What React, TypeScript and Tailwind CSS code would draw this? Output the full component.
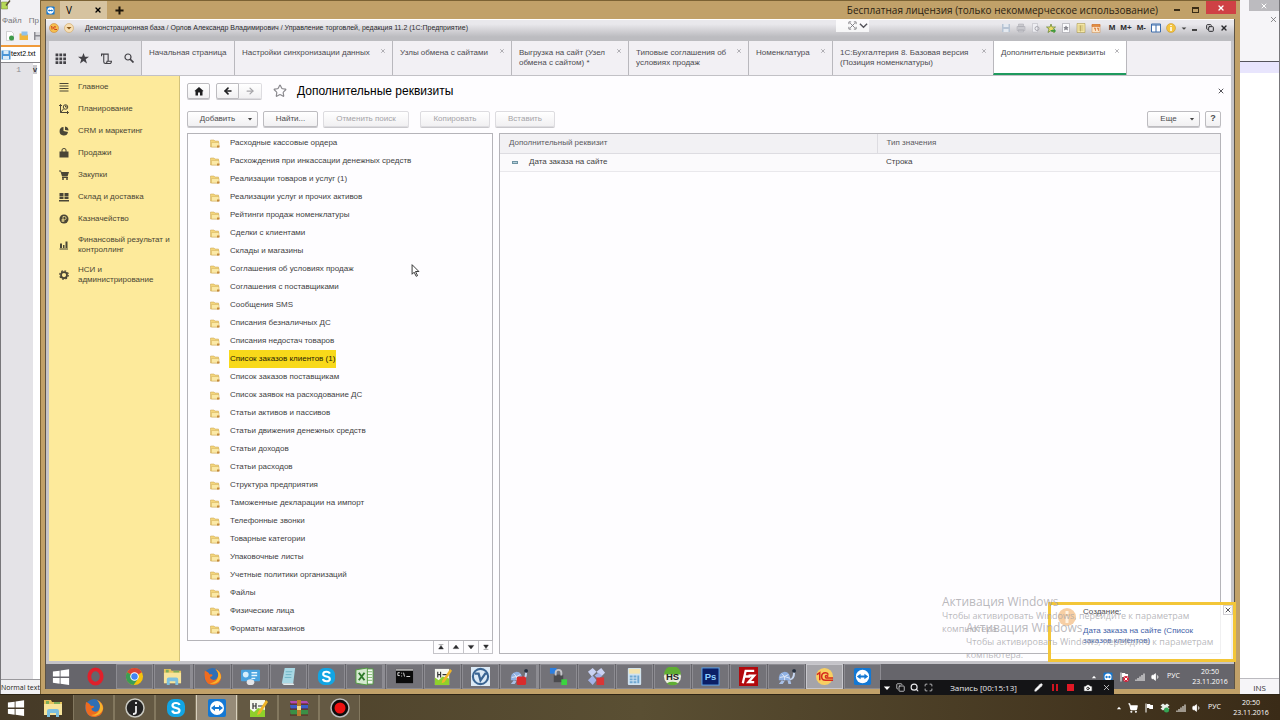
import type { ReactNode } from "react";
import clsx from "clsx";
import {
  ArrowLeft,
  ArrowRight,
  Camera,
  Copy,
  Maximize,
  Pencil,
  Search,
  ShoppingCart,
  Star,
  Volume1,
  X,
} from "lucide-react";

const tabs = [
  { title: "Начальная страница", width: "w-[93px]", closable: false },
  { title: "Настройки синхронизации данных", width: "w-[158px]", closable: true },
  { title: "Узлы обмена с сайтами", width: "w-[119px]", closable: true },
  { title: "Выгрузка на сайт (Узел обмена с сайтом) *", width: "w-[117px]", closable: true },
  { title: "Типовые соглашения об условиях продаж", width: "w-[120px]", closable: true },
  { title: "Номенклатура", width: "w-[84px]", closable: true },
  { title: "1С:Бухгалтерия 8. Базовая версия (Позиция номенклатуры)", width: "w-[161px]", closable: true },
  { title: "Дополнительные реквизиты", width: "w-[133px]", closable: true, active: true },
];

const treeItems = [
  "Расходные кассовые ордера",
  "Расхождения при инкассации денежных средств",
  "Реализации товаров и услуг (1)",
  "Реализации услуг и прочих активов",
  "Рейтинги продаж номенклатуры",
  "Сделки с клиентами",
  "Склады и магазины",
  "Соглашения об условиях продаж",
  "Соглашения с поставщиками",
  "Сообщения SMS",
  "Списания безналичных ДС",
  "Списания недостач товаров",
  "Список заказов клиентов (1)",
  "Список заказов поставщикам",
  "Список заявок на расходование ДС",
  "Статьи активов и пассивов",
  "Статьи движения денежных средств",
  "Статьи доходов",
  "Статьи расходов",
  "Структура предприятия",
  "Таможенные декларации на импорт",
  "Телефонные звонки",
  "Товарные категории",
  "Упаковочные листы",
  "Учетные политики организаций",
  "Файлы",
  "Физические лица",
  "Форматы магазинов",
];

const selectedItem = "Список заказов клиентов (1)";

function Glyph({ children, size = "size-[10px]" }: { children: ReactNode; size?: string }) {
  return (
    <svg viewBox="0 0 20 20" className={clsx(size, "shrink-0")} aria-hidden="true">
      {children}
    </svg>
  );
}

const sections = [
  {
    label: "Главное",
    icon: <path d="M1 3h18M1 8h18M1 13h18M1 18h18" stroke="#4a4636" strokeWidth="2.4" />,
  },
  {
    label: "Планирование",
    icon: (
      <g fill="none" stroke="#4a4636" strokeWidth="2">
        <path d="M3 1v16h16M0 4l3-3 3 3M16 14l3 3-3 3M3 17l6-7" />
        <circle cx="13" cy="6" r="4.5" />
        <path d="M13 3v3h3" />
      </g>
    ),
  },
  {
    label: "CRM и маркетинг",
    icon: (
      <g fill="#4a4636">
        <path d="M9 2a8.5 8.5 0 1 0 9 10l-9-2z" />
        <path d="M12 1v7l7 1a8 8 0 0 0-7-8z" />
      </g>
    ),
  },
  {
    label: "Продажи",
    icon: (
      <g>
        <path d="M1 7h18v12H1z" fill="#4a4636" />
        <path d="M6 9V4q0-3 4-3t4 3v5" fill="none" stroke="#4a4636" strokeWidth="2" />
      </g>
    ),
  },
  {
    label: "Закупки",
    icon: (
      <g fill="#4a4636">
        <path d="M0 1h4l1 3h15l-3 9H6L3 3H0z" />
        <path d="M6 14h12v2H6z" />
        <circle cx="8" cy="18" r="2" />
        <circle cx="16" cy="18" r="2" />
      </g>
    ),
  },
  {
    label: "Склад и доставка",
    icon: <path d="M1 2h8v6H1zM11 2h8v6h-8zM1 9h8v5H1zM11 9h8v5h-8zM0 16h20v3H0z" fill="#4a4636" />,
  },
  {
    label: "Казначейство",
    icon: (
      <g>
        <circle cx="10" cy="10" r="9" fill="#4a4636" />
        <path d="M8 16V5h3a3 3 0 0 1 0 6.5H5M5 14h6" fill="none" stroke="#fce998" strokeWidth="1.6" />
      </g>
    ),
  },
  {
    label: "Финансовый результат и контроллинг",
    tall: true,
    icon: <path d="M2 7h4v9H2zM8 10h3v6H8zM13 3h4v13h-4zM1 17h17v2H1z" fill="#4a4636" />,
  },
  {
    label: "НСИ и администрирование",
    tall: true,
    icon: (
      <g fill="none" stroke="#4a4636">
        <circle cx="10" cy="10" r="6" strokeWidth="3.5" />
        <circle cx="10" cy="10" r="8.5" strokeWidth="2.5" strokeDasharray="3.3 3.375" />
      </g>
    ),
  },
];

function WindowsLogo() {
  return (
    <Glyph size="size-[18px]">
      <path d="M1 4l7.5-1v6.500H1zM9.500 2.800L19 1.500v8H9.500zM1 11h7.500v6.500L1 16.400zM9.500 11H19v8l-9.500-1.400z" fill="#fff" />
    </Glyph>
  );
}

function FirefoxLogo() {
  return (
    <>
      <circle cx="10" cy="10" r="9" fill="#2f6fb5" />
      <path d="M2 4c3 1 4 2 5 4 3-1 4 1 2 2-2 0-2 2 0 3 4 2 7-1 7-5 0-2-1-4-3-6 5 2 7 6 6 10-1 5-5 7-9 7-6 0-10-6-8-15z" fill="#ee6b1f" />
      <path d="M13 2c4 2 6 5 6 9-2 6-8 8-12 6 5 0 9-3 9-9 0-2-1-4-3-6z" fill="#f7b52c" />
    </>
  );
}

function ExplorerLogo() {
  return (
    <>
      <path d="M1 2h7l1 2h10v13H1z" fill="#e6c35c" />
      <path d="M3 3h3v3H3zM11 4h6v2h-6z" fill="#7fae5a" />
      <path d="M1 6h18v11H1z" fill="#f7e49a" />
      <path d="M4 19v-6q0-2 2-2h8q2 0 2 2v6h-3v-4H7v4z" fill="#7cc0e0" />
    </>
  );
}

function SkypeLogo() {
  return (
    <>
      <rect x="1" y="1" width="18" height="18" rx="7" fill="#12a5e4" />
      <path d="M13.500 7C13 5.500 11.500 5 10 5c-2 0-3.500 1-3.500 2.500 0 3.500 7 1.500 7 5C13.500 14 12 15 10 15s-3.500-1-3.700-2.500" fill="none" stroke="#fff" strokeWidth="2.2" />
    </>
  );
}

function TeamViewerLogo() {
  return (
    <>
      <rect x="1" y="1" width="18" height="18" rx="2" fill="#1378d4" />
      <circle cx="10" cy="10" r="7" fill="#fff" />
      <path d="M4 10l4-3v2h4V7l4 3-4 3v-2H8v2z" fill="#1378d4" />
    </>
  );
}

function NotepadPlusLogo() {
  return (
    <>
      <path d="M2 2h15v17H2z" fill="#f5f7ee" />
      <path d="M2 11l4 3 4-4 7 2v7H2z" fill="#8fd12b" />
      <path d="M5 5v6M8 5v6M5 8h3M10 8h5" stroke="#333" strokeWidth="1.2" fill="none" />
      <path d="M18 2l-8 12-1 3 3-1 8-12z" fill="#f0b429" />
    </>
  );
}

function TurtleLogo() {
  return (
    <>
      <path d="M5 14l-3 4h4l2-3zM11 14l1 4h3l-1-4z" fill="#a8bfe5" />
      <path d="M2 14q-1-8 6-9 6 0 6 9z" fill="#8fb0e2" />
      <path d="M5 7l3 3 4-2M8 10v4M3 11l5-1 6 2" fill="none" stroke="#dfe8f7" />
      <path d="M13 13q4-1 4-8l2 1q0 7-5 8z" fill="#c6d5ef" />
      <circle cx="18" cy="4" r="2" fill="#26303f" />
    </>
  );
}

type TaskButton = { name: string; icon: ReactNode; plain?: boolean; stacked?: boolean; active?: boolean };

const remoteTasks: TaskButton[] = [
  {
    name: "Google Chrome",
    icon: (
      <>
        <circle cx="10" cy="10" r="9" fill="#f4c20d" />
        <path d="M10 10L2.200 5.500A9 9 0 0 1 17.800 5.500z" fill="#db4437" />
        <path d="M10 10L2.200 5.500A9 9 0 0 0 9 19l5-7z" fill="#3a9d55" />
        <circle cx="10" cy="10" r="4.5" fill="#fff" />
        <circle cx="10" cy="10" r="3.4" fill="#4285f4" />
      </>
    ),
  },
  { name: "Проводник", icon: <ExplorerLogo />, stacked: true },
  { name: "Firefox", icon: <FirefoxLogo /> },
  {
    name: "Панель управления",
    icon: (
      <>
        <rect x="0" y="3" width="20" height="12" rx="1" fill="#4aa3df" />
        <circle cx="5" cy="8" r="3" fill="#d6effc" />
        <path d="M11 6h6M11 9h6M11 12h4" stroke="#e8f6ff" strokeWidth="1.5" />
        <ellipse cx="10" cy="16" rx="4" ry="3" fill="#e4e6ea" />
      </>
    ),
  },
  {
    name: "Блокнот",
    icon: (
      <>
        <path d="M6 1h11l-2 16H3z" fill="#a8d8e4" />
        <path d="M3 17h12l1 2H5z" fill="#e3eef0" />
        <path d="M7 5h7M7 8h6M6 11h7" stroke="#6db2c4" />
      </>
    ),
  },
  { name: "Skype", icon: <SkypeLogo /> },
  {
    name: "Excel",
    stacked: true,
    icon: (
      <>
        <path d="M8 2h11v16H8z" fill="#f4f8f2" stroke="#4f9a3f" />
        <path d="M12 5h6M12 8h6M12 11h6M12 14h6" stroke="#7ab86c" />
        <path d="M1 3l12-2v18L1 17z" fill="#d5ead0" stroke="#4f9a3f" />
        <path d="M4 6l6 8M10 6l-6 8" stroke="#2e7a2a" strokeWidth="2" />
      </>
    ),
  },
  {
    name: "Командная строка",
    icon: (
      <>
        <rect x="1" y="2" width="18" height="15" fill="#0a0a0a" />
        <path d="M1 2h18v2H1z" fill="#aaa" />
        <path d="M5 6H3v3h2M7 6v1M7 9v1M9 6l1 4M12 10h4" stroke="#ddd" fill="none" />
      </>
    ),
  },
  { name: "Notepad++", icon: <NotepadPlusLogo /> },
  {
    name: "VNC",
    icon: (
      <>
        <rect x="0" y="0" width="20" height="20" fill="#dceaf6" />
        <circle cx="10" cy="10" r="8" fill="none" stroke="#3a6593" strokeWidth="2.2" />
        <path d="M4 7h4l2 7 5-7h2" fill="none" stroke="#3a6593" strokeWidth="2.4" />
      </>
    ),
  },
  {
    name: "TortoiseSVN",
    stacked: true,
    icon: (
      <>
        <TurtleLogo />
        <rect x="8" y="10" width="10" height="9" rx="2" fill="#d92c2c" />
      </>
    ),
  },
  {
    name: "WinSCP",
    icon: (
      <>
        <rect x="1" y="1" width="7" height="6" fill="#2d7fe0" />
        <rect x="5" y="8" width="10" height="8" fill="#4b4b4e" />
        <path d="M7 9V6q0-3 3-3t3 3v3" fill="none" stroke="#c4c4c8" strokeWidth="2" />
        <rect x="13" y="13" width="6" height="6" fill="#3bd43f" />
      </>
    ),
  },
  {
    name: "Конфигуратор",
    icon: (
      <>
        <path d="M1 5l5-4 4 4-5 5zM10 5l5-4 4 5-4 4z" fill="#c9d2f3" />
        <path d="M1 14l5-5 4 5-4 5zM8 9l4-3 4 3-4 4z" fill="#a4b3e8" />
        <path d="M10 11h8v8h-8z" fill="#d93636" />
      </>
    ),
  },
  {
    name: "Калькулятор",
    icon: (
      <>
        <rect x="3" y="1" width="14" height="18" rx="1" fill="#cfe2f0" />
        <rect x="4" y="2" width="12" height="5" fill="#f3e3ae" />
        <path d="M5 9h3v2H5zM9 9h3v2H9zM5 12h3v2H5zM9 12h3v2H9zM5 15h3v2H5zM9 15h3v2H9zM13 9h2v8h-2z" fill="#6fa8d2" />
      </>
    ),
  },
  {
    name: "HeidiSQL",
    icon: (
      <>
        <circle cx="10" cy="10" r="9" fill="#e9eddc" />
        <path d="M1 8a9 9 0 0 1 18 0z" fill="#5fae33" />
        <path d="M4 17a9 9 0 0 0 12 0q-6-3-12 0z" fill="#5fae33" />
        <text x="10" y="14" textAnchor="middle" fontSize="10" fontWeight="700" fontFamily="Liberation Sans, sans-serif" fill="#222">
          HS
        </text>
      </>
    ),
  },
  {
    name: "Photoshop",
    icon: (
      <>
        <rect x="1" y="1" width="18" height="18" fill="#0b1f66" stroke="#5da6ef" />
        <text x="10" y="14" textAnchor="middle" fontSize="10" fontWeight="700" fontFamily="Liberation Sans, sans-serif" fill="#8fd0ff">
          Ps
        </text>
      </>
    ),
  },
  {
    name: "FileZilla",
    icon: (
      <>
        <rect x="0" y="0" width="20" height="20" fill="#b3090d" />
        <path d="M4 17L7 4h9M6 10h6M10 9h6l-6 7h6" fill="none" stroke="#fff" strokeWidth="2.4" />
      </>
    ),
  },
  { name: "TortoiseHg", icon: <TurtleLogo /> },
  {
    name: "1С:Предприятие",
    active: true,
    icon: (
      <>
        <circle cx="10" cy="10" r="9" fill="#f8cf62" />
        <path d="M2 8l3-2v8M14 8q-1-2-3-2-4 0-4 4t4 4h8M14 10q-3-2-3 0t2 1.500h6" fill="none" stroke="#d62b1d" strokeWidth="1.6" />
      </>
    ),
  },
  { name: "TeamViewer", icon: <TeamViewerLogo /> },
];

const localTasks: TaskButton[] = [
  { name: "Проводник", icon: <ExplorerLogo />, plain: true },
  { name: "Firefox", icon: <FirefoxLogo /> },
  {
    name: "jing",
    icon: (
      <>
        <circle cx="10" cy="10" r="9" fill="#222" stroke="#c8c8c0" strokeWidth="1.5" />
        <path d="M11 8v6q0 2-3 2M11 4v2" fill="none" stroke="#eee" strokeWidth="1.8" />
      </>
    ),
  },
  { name: "Skype", icon: <SkypeLogo /> },
  { name: "TeamViewer", icon: <TeamViewerLogo />, active: true },
  { name: "Notepad++", icon: <NotepadPlusLogo /> },
  {
    name: "WinRAR",
    icon: (
      <>
        <path d="M1 3h17l2 3H2z" fill="#b34bb0" />
        <path d="M1 7h18v4H2z" fill="#3c5fc9" />
        <path d="M1 12h18v5H2z" fill="#3b8f46" />
        <path d="M1 6h18M1 11h18M1 17h18" stroke="#5a1f1f" />
        <path d="M8 2h4v16H8z" fill="#b87b2c" />
        <path d="M8 8h4v4H8z" fill="#f3dc8a" />
      </>
    ),
  },
  {
    name: "Запись экрана",
    icon: (
      <>
        <circle cx="10" cy="10" r="9" fill="#0c0c0c" stroke="#bcbcbc" strokeWidth="1.5" />
        <circle cx="10" cy="10" r="5.5" fill="#ee1111" />
      </>
    ),
  },
];

function FolderIcon() {
  return (
    <svg viewBox="0 0 20 18" className="h-[9px] w-[10px] shrink-0" aria-hidden="true">
      <path d="M1 2h7l2 2h7v12H1z" fill="#f3d57c" stroke="#c9a24a" />
      <path d="M3 7h15v9H3z" fill="#fbe9a6" stroke="#d3ae57" />
      <path d="M14 13h5v4h-5z" fill="#c48a3a" />
    </svg>
  );
}

function SignalIcon() {
  return (
    <Glyph>
      <path d="M1 15h2v3H1zM5 12h2v6H5zM9 9h2v9H9zM13 6h2v12h-2zM17 3h2v15h-2z" fill="#fff" />
    </Glyph>
  );
}

function FlagIcon({ alert }: { alert?: boolean }) {
  return (
    <Glyph>
      <path d="M3 1h2v18H3zM6 2h6l1 2h5v8h-7l-1-2H6z" fill="#fff" />
      {alert && <circle cx="14" cy="14" r="6" fill="#d7263d" />}
      {alert && <path d="M11 11l6 6M17 11l-6 6" stroke="#fff" strokeWidth="2" />}
    </Glyph>
  );
}

function Clock() {
  return (
    <div className="w-12 text-center text-[7px] leading-[10px]">
      <div>20:50</div>
      <div>23.11.2016</div>
    </div>
  );
}

function CommandButton({ children, disabled, className }: { children: ReactNode; disabled?: boolean; className: string }) {
  return (
    <button
      type="button"
      disabled={disabled}
      className={clsx(
        "flex h-4 items-center justify-center rounded-xs border bg-gradient-to-b from-white to-[#f1f0f2] shadow-[0_1px_0_#c9c8cc]",
        disabled ? "border-[#dddce0] text-[#a5a4a8]" : "border-[#bdbcc0] text-[#4b4b4e]",
        className,
      )}
    >
      {children}
    </button>
  );
}

function EditorLeft() {
  return (
    <aside className="flex w-10 shrink-0 flex-col overflow-hidden border-l border-[#77767a] bg-[#f1f0f3] whitespace-nowrap">
      <div className="flex h-[14px] items-start">
        <Glyph>
          <path d="M1 4h12v14H1z" fill="#b6d957" stroke="#6b7f2c" />
          <path d="M18 1l-8 10" stroke="#5c5138" strokeWidth="3" />
        </Glyph>
      </div>
      <div className="flex h-[13px] items-center justify-between pr-px pl-px text-[#77767a]">
        <span>Файл</span>
        <span>Пр</span>
      </div>
      <div className="flex h-[18px] items-center gap-1 pl-1">
        <Glyph>
          <path d="M3 1h10l4 4v14H3z" fill="#fff" stroke="#aaa" />
          <circle cx="13" cy="14" r="5" fill="#3f9a4a" />
        </Glyph>
        <Glyph>
          <path d="M1 5h7l2 2h8v11H1z" fill="#f0b63c" />
          <path d="M5 1h12v8H5z" fill="#8fc1ea" />
        </Glyph>
        <Glyph>
          <path d="M2 2h16v16H2z" fill="#8b8b92" />
          <path d="M5 2h9v6H5zM5 11h10v7H5z" fill="#d8d8dc" />
        </Glyph>
      </div>
      <div className="flex h-[17px] items-center border-t-2 border-[#f09a3a] bg-white text-[7px] text-black">
        <Glyph>
          <path d="M1 1h18v18H1z" fill="#4b94d6" />
          <path d="M5 1h10v7H5zM4 12h12v7H4z" fill="#dcebf8" />
        </Glyph>
        text2.txt
      </div>
      <div className="flex min-h-0 flex-1 border-t border-[#88878b]">
        <div className="w-8 bg-[#e4e3e7] pr-3 text-right font-['Liberation_Mono',monospace] leading-[14px] text-[#8b8a8e]">1</div>
        <div className="flex-1 bg-white leading-[14px]">
          <span className="bg-[#c8c8cc]">v</span>
        </div>
      </div>
      <div className="h-[15px] border-t border-[#9a999d] font-['Open_Sans',sans-serif] text-[7px] leading-[15px] text-[#1e1e20]">Normal text</div>
    </aside>
  );
}

function EditorRight() {
  return (
    <aside className="flex w-10 shrink-0 flex-col border-r border-[#77767a] bg-[#f6f5f8]">
      <div className="flex h-[11px] justify-end">
        <button type="button" aria-label="Закрыть редактор" className="flex w-[30px] items-center justify-center bg-[#bcbbbf] text-white">
          <X size={8} strokeWidth={3} />
        </button>
      </div>
      <div className="flex h-[51px] justify-end border-b border-[#55545c] pt-1 pr-px text-[#66656a]">
        <X size={9} />
      </div>
      <div className="min-h-0 flex-1 bg-white">
        <div className="h-[11px] bg-[#e8e5fd]" />
      </div>
      <div className="h-4 border-t border-[#bbbabf] text-center font-['Open_Sans',sans-serif] leading-[18px] text-[#333]">INS</div>
    </aside>
  );
}

function ViewerTitle() {
  return (
    <header className="flex h-[19px] items-center border-t border-[#7b6234] text-[#2b2112]">
      <div className="flex w-[19px] justify-center">
        <Glyph size="size-[9px]">
          <TeamViewerLogo />
        </Glyph>
      </div>
      <div className="flex h-full w-[47px] items-center bg-[#d6c3a0] pl-1.5 font-['Open_Sans',sans-serif] text-[10px] text-black">
        V
        <button type="button" aria-label="Закрыть сеанс" className="ml-[22px]">
          <X size={8} strokeWidth={4} />
        </button>
      </div>
      <button type="button" aria-label="Новый сеанс" className="ml-2">
        <Glyph size="size-[9px]">
          <path d="M10 1v18M1 10h18" stroke="#1c150a" strokeWidth="4.5" />
        </Glyph>
      </button>
      <span className="ml-auto font-['Open_Sans',sans-serif] text-[10px] whitespace-nowrap">
        Бесплатная лицензия (только некоммерческое использование)
      </span>
      <button type="button" aria-label="Свернуть" className="ml-4 h-[2px] w-[6px] bg-[#3a2d17]" />
      <button type="button" aria-label="Развернуть" className="ml-3 h-[6px] w-[7px] border border-t-2 border-[#3a2d17]" />
      <button type="button" aria-label="Закрыть" className="ml-[7px] flex h-[13px] w-[30px] items-center justify-center self-start bg-[#cf4145] text-white">
        <X size={8} strokeWidth={4} />
      </button>
      <div className="w-[4px]" />
    </header>
  );
}

function AppTitle() {
  return (
    <div className="flex h-[22px] items-center gap-[5px] border-t border-white bg-gradient-to-b from-[#e9e8ec] from-20% to-[#bcbcc0] to-80% pr-[6px] pb-[5px] pl-[3px] text-[#2b2b2e]">
      <Glyph>
        <circle cx="10" cy="10" r="9" fill="#f6c04e" stroke="#c9782a" />
        <path d="M4 8l2-1v6M14 8q-5-2-5 2t7 3" fill="none" stroke="#cf3b1c" strokeWidth="2" />
      </Glyph>
      <Glyph>
        <circle cx="10" cy="10" r="9" fill="#f7dfb4" stroke="#c99a4f" />
        <path d="M5 8h10l-5 5z" fill="#8a5a1c" />
      </Glyph>
      <span className="ml-[6px] text-[7px] whitespace-nowrap">
        Демонстрационная база / Орлов Александр Владимирович / Управление торговлей, редакция 11.2 (1С:Предприятие)
      </span>
      <div className="ml-auto flex items-center gap-[5px]">
        <Glyph>
          <path d="M2 2h16v16H2z" fill="#b7c4d4" />
          <path d="M5 2h10v6H5zM5 12h10v6H5z" fill="#e4e9f0" />
        </Glyph>
        <Glyph>
          <path d="M2 7h16v8H2zM5 2h10v5H5zM5 13h10v5H5z" fill="#c9c9ce" stroke="#a9a9b0" />
        </Glyph>
        <Glyph>
          <path d="M3 1h10v17H3z" fill="#eeeef2" stroke="#b3b3ba" />
          <circle cx="12" cy="11" r="4" fill="none" stroke="#a8a8b0" strokeWidth="2" />
        </Glyph>
        <Glyph>
          <path d="M10 2l2 6h7l-5 4 2 7-6-4-6 4 2-7-5-4h7z" fill="#e9dc68" stroke="#6c8a35" strokeWidth="1.5" />
          <path d="M10 14h6v-3l4 5-4 4v-3h-6z" fill="#3d9b3d" />
        </Glyph>
        <Glyph>
          <path d="M3 1h14v18H3z" fill="#fafafc" stroke="#8f8f97" />
          <path d="M10 5l2 3h3l-2 3 1 4-4-2-4 2 1-4-2-3h3z" fill="#87878f" />
        </Glyph>
        <Glyph>
          <path d="M2 1h16v18H2z" fill="#f5e8a6" stroke="#9c8a3c" />
          <path d="M5 6h10M5 10h10M5 14h10M9 5v12" stroke="#9c8a3c" />
        </Glyph>
        <Glyph>
          <path d="M2 3h16v16H2z" fill="#fbe3c5" stroke="#d08a42" />
          <path d="M2 3h16v4H2zM6 10h3v6M12 10h3v6" fill="#e0913e" stroke="#d0622a" />
        </Glyph>
        <span className="ml-[3px] font-bold">M</span>
        <span className="font-bold">M+</span>
        <span className="font-bold">M-</span>
        <Glyph>
          <path d="M1 2h18v16H1z" fill="#fff" stroke="#3c6cab" strokeWidth="2" />
          <path d="M1 4h18M10 4v14" stroke="#3c6cab" strokeWidth="2" />
        </Glyph>
        <Glyph>
          <circle cx="10" cy="10" r="9" fill="#f4c53f" stroke="#c48e2b" />
          <path d="M10 4v2M10 8v8" stroke="#fff" strokeWidth="3" />
        </Glyph>
        <Glyph size="size-[6px]">
          <path d="M2 8h16l-8 8z" fill="#444" />
        </Glyph>
        <button type="button" aria-label="Свернуть окно" className="mt-1 h-[2px] w-[5px] bg-[#444]" />
        <Copy size={8} strokeWidth={3} className="ml-1" />
        <X size={8} strokeWidth={4} className="ml-px" />
      </div>
    </div>
  );
}

function TabBar() {
  return (
    <div className="flex h-[35px] border-b border-[#c2c1c6] bg-[#f2f0f4] text-[#4c4b50]">
      <div className="flex w-[92px] shrink-0 items-center justify-between bg-[#e6e5e9] pr-[7px] pl-[6px]">
        <button type="button" aria-label="Меню">
          <Glyph size="size-[11px]">
            <path d="M1 1h5v5H1zM8 1h5v5H8zM15 1h5v5h-5zM1 8h5v5H1zM8 8h5v5H8zM15 8h5v5h-5zM1 15h5v5H1zM8 15h5v5H8zM15 15h5v5h-5z" fill="#434247" />
          </Glyph>
        </button>
        <button type="button" aria-label="Избранное">
          <Glyph size="size-[11px]">
            <path d="M10 0l2.600 7H20l-6 4.500 2.300 7.500L10 14.500 3.700 19 6 11.500 0 7h7.400z" fill="#434247" />
          </Glyph>
        </button>
        <button type="button" aria-label="История">
          <Glyph size="size-[11px]">
            <path d="M1 6V2h12v12M5 2v14q0 3 3 3h9q2-1 2-4h-8q0 4-3 4" fill="none" stroke="#434247" strokeWidth="2" />
          </Glyph>
        </button>
        <button type="button" aria-label="Поиск">
          <Glyph>
            <circle cx="8" cy="8" r="6" fill="none" stroke="#434247" strokeWidth="2.4" />
            <path d="M12 12l7 7" stroke="#434247" strokeWidth="3.5" />
          </Glyph>
        </button>
      </div>
      {tabs.map((tab) => (
        <div
          key={tab.title}
          className={clsx(
            "flex min-w-0 items-start border-l border-[#b9b8bd] pt-[7px] pl-[7px]",
            tab.width,
            tab.active && "border-b-2 border-b-[#1f9a5e] bg-white",
          )}
        >
          <button type="button" className="min-w-0 flex-1 text-left leading-[10px]">
            {tab.title}
          </button>
          {tab.closable && (
            <button type="button" aria-label={`Закрыть: ${tab.title}`} className="mr-[6px] ml-1 text-[#99989d]">
              <X size={6} strokeWidth={3} />
            </button>
          )}
        </div>
      ))}
      <div className="flex-1 border-l border-[#b9b8bd]" />
    </div>
  );
}

function Sidebar() {
  return (
    <nav className="w-[131px] shrink-0 border-r border-[#d2c27c] bg-[#fdea9b] text-[#4a4634]">
      {sections.map((section) => (
        <a
          key={section.label}
          href="#section"
          className={clsx("flex items-center gap-[9px] pr-1 pl-[10px] leading-[10px]", section.tall ? "h-[30px]" : "h-[22px]")}
        >
          <Glyph>{section.icon}</Glyph>
          <span>{section.label}</span>
        </a>
      ))}
    </nav>
  );
}

function TreePanel() {
  return (
    <div className="flex w-[306px] shrink-0 flex-col">
      <ul className="min-h-0 flex-1 overflow-hidden border border-[#b5b4b9] text-[#3f3f43]">
        {treeItems.map((item) => (
          <li key={item} className="flex h-[18px] items-center gap-[9px] pl-[22px] whitespace-nowrap">
            <FolderIcon />
            <span className={clsx("px-px leading-[18px]", item === selectedItem && "bg-[#f8d91a] text-[#1f1c08]")}>{item}</span>
          </li>
        ))}
      </ul>
      <div className="flex h-[13px] justify-end">
        {[
          { label: "В начало", d: "M4 4h12M10 6l6 9H4z" },
          { label: "Вверх", d: "M10 5l7 9H3z" },
          { label: "Вниз", d: "M10 15l7-9H3z" },
          { label: "В конец", d: "M4 16h12M10 14l6-9H4z" },
        ].map((arrow) => (
          <button
            key={arrow.label}
            type="button"
            aria-label={arrow.label}
            className="flex w-[15px] items-center justify-center border-b border-l border-[#c5c4c9] last:border-r"
          >
            <Glyph size="size-[8px]">
              <path d={arrow.d} fill="#2b2b2e" stroke="#2b2b2e" />
            </Glyph>
          </button>
        ))}
      </div>
    </div>
  );
}

function AttributesTable() {
  return (
    <div className="min-w-0 flex-1 border border-[#b5b4b9]">
      <table className="w-full table-fixed border-collapse text-left">
        <thead>
          <tr className="h-[19px] border-b border-[#dddce1] bg-[#f2f1f4] text-[#5b5a5f]">
            <th className="w-[377px] pl-[9px] font-normal">Дополнительный реквизит</th>
            <th className="border-l border-[#dddce1] pl-[9px] font-normal">Тип значения</th>
          </tr>
        </thead>
        <tbody>
          <tr className="h-[18px] border-b border-[#e9e8ec] bg-[#fbfafc] text-[#3f3f43]">
            <td className="pl-[12px]">
              <span className="flex items-center gap-[11px]">
                <span className="h-[3px] w-[6px] border border-[#6f93a3] bg-[#b5d0da]" />
                Дата заказа на сайте
              </span>
            </td>
            <td className="pl-[9px]">Строка</td>
          </tr>
        </tbody>
      </table>
    </div>
  );
}

function MainForm() {
  return (
    <main className="flex min-w-0 flex-1 flex-col bg-[#fefdff] pt-[7px] pr-[10px] pb-[7px] pl-[7px]">
      <div className="flex h-4 items-center">
        <CommandButton className="w-[23px]">
          <Glyph>
            <path d="M1 10l9-8 9 8-2 1v8h-5v-6H8v6H3v-8z" fill="#1e1e20" />
          </Glyph>
        </CommandButton>
        <div className="ml-[6px] flex">
          <CommandButton className="w-[23px] rounded-r-none">
            <ArrowLeft size={10} strokeWidth={4} className="text-[#1e1e20]" />
          </CommandButton>
          <CommandButton className="w-[23px] rounded-l-none border-l-0" disabled>
            <ArrowRight size={10} strokeWidth={3} />
          </CommandButton>
        </div>
        <Star size={14} strokeWidth={2} className="ml-[11px] text-[#8a898e]" />
        <h1 className="ml-[10px] text-[12px] text-black">Дополнительные реквизиты</h1>
        <button type="button" aria-label="Закрыть форму" className="-mr-1 ml-auto text-[#55545a]">
          <X size={8} strokeWidth={3} />
        </button>
      </div>
      <div className="mt-[11px] flex h-[17px] items-center gap-[5px]">
        <CommandButton className="w-[71px] gap-3 pl-2">
          Добавить
          <Glyph size="size-[6px]">
            <path d="M3 7h14l-7 8z" fill="#444" />
          </Glyph>
        </CommandButton>
        <CommandButton className="w-[55px]">Найти...</CommandButton>
        <CommandButton className="w-[86px]" disabled>
          Отменить поиск
        </CommandButton>
        <CommandButton className="ml-[6px] w-[70px]" disabled>
          Копировать
        </CommandButton>
        <CommandButton className="w-[60px]" disabled>
          Вставить
        </CommandButton>
        <CommandButton className="ml-auto w-[53px] gap-3 pl-2">
          Еще
          <Glyph size="size-[6px]">
            <path d="M3 7h14l-7 8z" fill="#444" />
          </Glyph>
        </CommandButton>
        <CommandButton className="w-4 text-[9px] font-bold">?</CommandButton>
      </div>
      <div className="mt-[6px] flex min-h-0 flex-1 gap-[6px]">
        <TreePanel />
        <AttributesTable />
      </div>
    </main>
  );
}

function RemoteTaskbar() {
  return (
    <div className="flex h-[25px] items-center bg-[#66656b] pl-[3px] font-['Open_Sans',sans-serif] text-white">
      <button type="button" aria-label="Пуск" className="ml-[3px]">
        <WindowsLogo />
      </button>
      <button type="button" aria-label="Opera" className="mr-[11px] ml-[16px]">
        <Glyph size="size-[19px]">
          <ellipse cx="10" cy="10" rx="6.5" ry="7.5" fill="none" stroke="#e0202b" strokeWidth="4" />
        </Glyph>
      </button>
      <div className="flex h-full gap-px">
        {remoteTasks.map((task) => (
          <button
            key={task.name}
            type="button"
            aria-label={task.name}
            className={clsx(
              "flex w-[37px] items-center justify-center border",
              task.active ? "border-[#c9c8cd] bg-[#a5a4a9]" : "border-[#8d8c92] bg-[#737278]",
              task.stacked && "mr-[2px] shadow-[2px_0_0_#8d8c92]",
            )}
          >
            <Glyph size="size-[19px]">{task.icon}</Glyph>
          </button>
        ))}
      </div>
      <div className="ml-auto flex items-center gap-[6px]">
        <Glyph size="size-[6px]">
          <path d="M3 14h14l-7-8z" fill="#fff" />
        </Glyph>
        <Glyph>
          <TeamViewerLogo />
        </Glyph>
        <FlagIcon alert />
        <SignalIcon />
        <Volume1 size={10} fill="#fff" />
        <span className="text-[7px]">РУС</span>
        <Clock />
      </div>
    </div>
  );
}

function LocalTaskbar() {
  return (
    <footer className="flex h-[26px] shrink-0 items-center border-t border-[#2e2515] bg-gradient-to-r from-[#463a27] via-[#5a4f33] to-[#3a2b17] pr-[5px] font-['Open_Sans',sans-serif] text-white">
      <button type="button" aria-label="Пуск" className="flex w-8 justify-center">
        <WindowsLogo />
      </button>
      <div className="flex h-full">
        {localTasks.map((task) => (
          <button
            key={task.name}
            type="button"
            aria-label={task.name}
            className={clsx(
              "flex w-[41px] items-center justify-center border-x",
              task.plain && "border-transparent",
              task.active && "border-[#d8d0bd] bg-[#968b78]",
              !task.plain && !task.active && "border-[#83785f] bg-[#645943]",
            )}
          >
            <Glyph size="size-5">{task.icon}</Glyph>
          </button>
        ))}
      </div>
      <div className="ml-auto flex items-center gap-[6px]">
        <Glyph size="size-[6px]">
          <path d="M3 14h14l-7-8z" fill="#fff" />
        </Glyph>
        <ShoppingCart size={10} fill="#fff" strokeWidth={3} />
        <FlagIcon />
        <Glyph>
          <path d="M1 5l5-4 4 3 4-3 5 4-4 3 4 3-5 4-4-3-4 3-5-4 4-3z" fill="#e7f0ea" />
          <circle cx="13" cy="14" r="5" fill="#35a555" />
        </Glyph>
        <SignalIcon />
        <Volume1 size={10} fill="#fff" />
        <span className="text-[7px]">РУС</span>
        <Clock />
      </div>
    </footer>
  );
}

function RecorderBar() {
  return (
    <div className="absolute right-[166px] bottom-[25px] flex h-[15px] w-[234px] items-center gap-[5px] bg-[#141416] px-[3px] font-['Open_Sans',sans-serif] text-[#e9e9ec]">
      <Glyph size="size-[8px]">
        <path d="M2 6h16l-8 9z" fill="#fff" />
      </Glyph>
      <Copy size={9} strokeWidth={2} />
      <Search size={9} strokeWidth={3} />
      <Maximize size={9} />
      <span className="mx-auto whitespace-nowrap">Запись [00:15:13]</span>
      <Pencil size={9} fill="#fff" />
      <button type="button" aria-label="Пауза" className="ml-1 h-[7px] w-[6px] border-x-2 border-[#cf1420]" />
      <button type="button" aria-label="Стоп" className="mx-1 size-[7px] bg-[#e01825]" />
      <Camera size={10} fill="#fff" stroke="#141416" />
      <X size={9} className="ml-1" />
    </div>
  );
}

function ActivationNotice({ className }: { className: string }) {
  return (
    <div className={clsx("pointer-events-none absolute w-[266px] font-['Open_Sans',sans-serif] text-[#a2a1a6]/75", className)}>
      <div className="text-[12px] leading-[14px]">Активация Windows</div>
      <div className="text-[9px] leading-[13px]">Чтобы активировать Windows, перейдите к параметрам компьютера.</div>
    </div>
  );
}

function CreatedToast() {
  return (
    <div className="absolute right-[44px] bottom-[58px] flex h-[60px] w-[188px] border-[3px] border-[#f3c638] bg-white/80 pt-[2px] pl-[6px]">
      <Glyph size="size-5">
        <circle cx="10" cy="10" r="9" fill="#f7cfa4" />
        <path d="M10 4v3M10 9v7" stroke="#fff3e2" strokeWidth="3" />
      </Glyph>
      <div className="ml-[6px] leading-[10px] text-[#4c4b50]">
        <div>Создание:</div>
        <a href="#created" className="mt-[9px] block w-[125px] text-[#3f62a8]">
          Дата заказа на сайте (Список заказов клиентов)
        </a>
      </div>
      <button type="button" aria-label="Закрыть уведомление" className="absolute top-0 right-0 flex size-[10px] items-center justify-center border border-[#d0cfd4] text-[#55545a]">
        <X size={8} strokeWidth={3} />
      </button>
    </div>
  );
}

export default function App() {
  return (
    <div className="relative flex h-screen flex-col overflow-hidden bg-white font-['Liberation_Sans',Arial,sans-serif] text-[8px]">
      <div className="flex min-h-0 flex-1">
        <EditorLeft />
        <section className="flex min-w-0 flex-1 flex-col border-l border-[#7b6234] bg-[#c1a169]">
          <ViewerTitle />
          <div className="mr-[5px] mb-[5px] ml-[4px] flex min-h-0 flex-1 flex-col border-x border-[#5c5346]">
            <AppTitle />
            <div className="flex min-h-0 flex-1 flex-col border-x-[3px] border-b-[3px] border-[#c4c3c8]">
              <TabBar />
              <div className="flex min-h-0 flex-1">
                <Sidebar />
                <MainForm />
              </div>
            </div>
            <RemoteTaskbar />
          </div>
        </section>
        <EditorRight />
      </div>
      <LocalTaskbar />

      <div className="absolute top-[19px] left-[836px] flex h-[13px] w-[33px] items-center justify-end gap-[2px] bg-white/80 pr-px text-[#66656a]">
        <Glyph size="size-[9px]">
          <path d="M2 2h5M2 2v5M18 2h-5M18 2v5M2 18h5M2 18v-5M18 18h-5M18 18v-5M5 5l10 10M15 5L5 15" stroke="#77767b" strokeWidth="2" />
        </Glyph>
        <Glyph size="size-[9px]">
          <path d="M2 6l8 8 8-8" fill="none" stroke="#55545a" strokeWidth="3" />
        </Glyph>
      </div>

      <CreatedToast />
      <ActivationNotice className="right-[72px] bottom-[85px]" />
      <ActivationNotice className="right-[48px] bottom-[59px]" />
      <RecorderBar />

      <svg viewBox="0 0 12 19" className="absolute top-[264px] left-[411px] h-[13px] w-[9px]" aria-hidden="true">
        <path d="M1 1v14l3-3 3 6 2-1-3-6h5z" fill="#fff" stroke="#222" strokeWidth="1.3" />
      </svg>
    </div>
  );
}
